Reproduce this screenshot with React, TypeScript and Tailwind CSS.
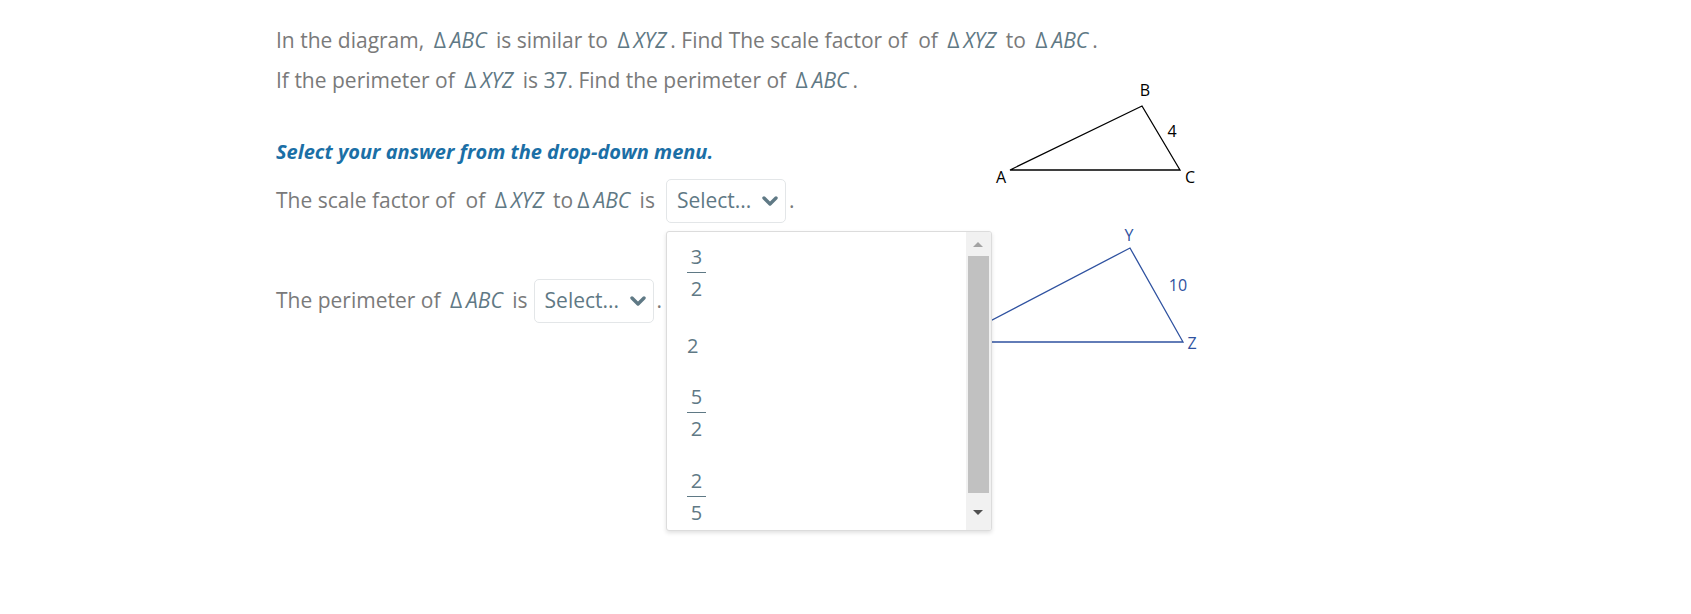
import React from 'react';

const font = { fontFamily: '"Open Sans", "Noto Sans", sans-serif' };

function Tri({ name }: { name: string }) {
  return (
    <span className="mx-[4px] text-[#5f7985]">
      Δ<i className="ml-[4px]">{name}</i>
    </span>
  );
}

function Chevron() {
  return (
    <svg width="16" height="10" viewBox="0 0 16 10" className="shrink-0">
      <polyline points="2,2 8,8 14,2" fill="none" stroke="#5f7985" strokeWidth="3.4" strokeLinecap="round" strokeLinejoin="round" />
    </svg>
  );
}

function SelectBox() {
  return (
    <span className="inline-flex h-[44px] w-[120px] items-center justify-between rounded-[5px] border border-[#e3e6e8] bg-white pl-[10px] pr-[7px] text-[21px] text-[#5f7985]">
      <span>Select...</span>
      <Chevron />
    </span>
  );
}

function Frac({ n, d }: { n: string; d: string }) {
  return (
    <div className="grid w-[19px] justify-items-center">
      <span className="block w-[19px] border-b border-solid border-[#5f7985] text-center leading-[30px]">{n}</span>
      <span className="block w-[19px] text-center leading-[32px]">{d}</span>
    </div>
  );
}

function Dropdown() {
  const items = [
    { h: 'h-[83px]', el: <Frac n="3" d="2" /> },
    { h: 'h-[62px]', el: <span>2</span> },
    { h: 'h-[72px]', el: <Frac n="5" d="2" /> },
    { h: 'h-[96px]', el: <Frac n="2" d="5" /> },
  ];
  return (
    <div className="absolute left-0 top-[52px] z-10 flex h-[300px] w-[326px] overflow-hidden rounded-[3px] border border-[#dcdcdc] bg-white shadow-[0_2px_4px_rgba(0,0,0,0.12)]">
      <div className="flex-1 overflow-hidden text-[20px] text-[#5f7985]">
        {items.map((it, i) => (
          <div key={i} className={`${it.h} flex items-center pl-[20px]`}>
            {it.el}
          </div>
        ))}
      </div>
      <div className="flex w-[25px] flex-col items-center bg-[#f1f1f1]">
        <div className="flex h-[24px] w-full items-center justify-center">
          <span className="h-0 w-0 border-x-[5px] border-b-[5px] border-x-transparent border-b-[#a3a3a3]" />
        </div>
        <div className="h-[237px] w-[21px] bg-[#c1c1c1]" />
        <div className="flex w-full flex-1 items-center justify-center pt-[2px]">
          <span className="h-0 w-0 border-x-[5px] border-t-[5px] border-x-transparent border-t-[#505050]" />
        </div>
      </div>
    </div>
  );
}

function Diagram() {
  const ff = '"Open Sans", "Noto Sans", sans-serif';
  return (
    <svg width="275" height="290" viewBox="0 0 275 290" className="shrink-0">
      <polygon points="69,92 201,28 239,92" fill="none" stroke="#000" strokeWidth="1.3" />
      <g fontFamily={ff} fontSize="16" fill="#000" textAnchor="middle" dominantBaseline="central">
        <text x="60" y="99">A</text>
        <text x="204" y="12">B</text>
        <text x="231" y="53">4</text>
        <text x="249" y="99">C</text>
      </g>
      <polygon points="9,264 189,170 242,264" fill="none" stroke="#2f52a0" strokeWidth="1.3" />
      <g fontFamily={ff} fontSize="16" fill="#2f52a0" textAnchor="middle" dominantBaseline="central">
        <text x="188" y="157">Y</text>
        <text x="237" y="207">10</text>
        <text x="251" y="265">Z</text>
      </g>
    </svg>
  );
}

export default function App() {
  return (
    <div className="min-h-[614px] w-full bg-white pl-[276px] pt-[20px] text-[21px] text-[#7a7a7a]" style={font}>
      <p className="whitespace-nowrap leading-[40px]">
        In the diagram, <Tri name="ABC" /> is similar to <Tri name="XYZ" />. Find The scale factor of&nbsp; of <Tri name="XYZ" /> to <Tri name="ABC" />.
      </p>
      <div className="flex w-[940px] items-start justify-between">
        <div className="flex flex-col">
          <p className="whitespace-nowrap leading-[40px]">
            If the perimeter of <Tri name="XYZ" /> is <span className="text-[#5f7985]">37</span>. Find the perimeter of <Tri name="ABC" />.
          </p>
          <p className="mt-[37px] text-[20px] font-bold italic leading-[30px] text-[#1b6fa6]">
            Select your answer from the drop-down menu.
          </p>
          <div className="mt-[12px] flex h-[44px] items-center whitespace-nowrap">
            <span>
              The scale factor of&nbsp; of <Tri name="XYZ" /> to<Tri name="ABC" /> is
            </span>
            <span className="relative ml-[11px] inline-flex">
              <SelectBox />
              <Dropdown />
            </span>
            <span className="ml-[3px]">.</span>
          </div>
          <div className="mt-[56px] flex h-[44px] items-center whitespace-nowrap">
            <span>
              The perimeter of <Tri name="ABC" /> is
            </span>
            <span className="ml-[6px] inline-flex">
              <SelectBox />
            </span>
            <span className="ml-[3px]">.</span>
          </div>
        </div>
        <div className="mt-[18px]">
          <Diagram />
        </div>
      </div>
    </div>
  );
}
